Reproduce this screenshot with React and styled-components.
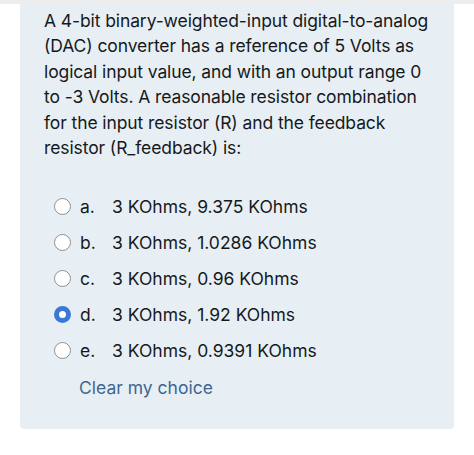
import React from 'react'
import styled, { createGlobalStyle } from 'styled-components'

const GlobalStyle = createGlobalStyle`
  html, body {
    margin: 0;
    padding: 0;
    background: #ffffff;
  }
  body {
    font-family: Inter, "Liberation Sans", Arial, sans-serif;
    color: #16191c;
  }
`

const TopRule = styled.div`
  height: 4px;
  background: #ededed;
`

const Panel = styled.div`
  margin: 0 20px;
  height: 425px;
  box-sizing: border-box;
  padding: 4px 24px 0 24px;
  background: #e7eff4;
  border-radius: 0 0 4px 4px;
`

const Question = styled.p`
  margin: 0;
  font-size: 17.5px;
  line-height: 25.4px;
  letter-spacing: -0.1px;
`

const Answers = styled.div`
  margin-top: 28px;
  display: flex;
  flex-direction: column;
`

const Row = styled.label`
  display: flex;
  align-items: center;
  height: 36px;
  font-size: 17.5px;
`

const Radio = styled.span`
  box-sizing: border-box;
  width: 17px;
  height: 17px;
  margin-left: 10px;
  margin-right: 9px;
  border-radius: 50%;
  background: #ffffff;
  border: ${p => (p.checked ? '5px solid #3a78d8' : '1.5px solid #8d8f92')};
  flex-shrink: 0;
`

const Letter = styled.span`
  width: 32px;
`

const ClearLink = styled.a`
  display: block;
  margin-top: 9px;
  margin-left: 35px;
  font-size: 17.5px;
  color: #3f6690;
  text-decoration: none;
`

const options = [
  { key: 'a', text: '3 KOhms, 9.375 KOhms' },
  { key: 'b', text: '3 KOhms, 1.0286 KOhms' },
  { key: 'c', text: '3 KOhms, 0.96 KOhms' },
  { key: 'd', text: '3 KOhms, 1.92 KOhms', checked: true },
  { key: 'e', text: '3 KOhms, 0.9391 KOhms' },
]

function App() {
  return (
    <>
      <GlobalStyle />
      <TopRule />
      <Panel>
        <Question>
          A 4-bit binary-weighted-input digital-to-analog (DAC) converter has a
          reference of 5 Volts as logical input value, and with an output range 0
          to -3 Volts. A reasonable resistor combination for the input resistor
          (R) and the feedback resistor (R_feedback) is:
        </Question>
        <Answers>
          {options.map(o => (
            <Row key={o.key}>
              <Radio checked={o.checked} />
              <Letter>{o.key}.</Letter>
              <span>{o.text}</span>
            </Row>
          ))}
        </Answers>
        <ClearLink href="#">Clear my choice</ClearLink>
      </Panel>
    </>
  )
}

export default App
